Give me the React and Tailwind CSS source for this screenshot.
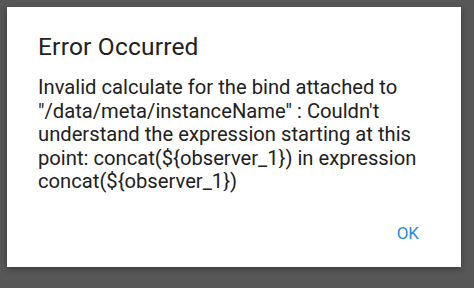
import React from 'react';

const ErrorDialog = ({ title, message, action }) => {
  return (
    <div className="w-[454px] h-[260px] bg-white flex flex-col shadow-[0_2px_6px_rgba(0,0,0,0.35)]">
      <h2 className="pl-[31px] pt-[26px] text-[24.5px] leading-[28px] tracking-[0.2px] text-[#212121]">{title}</h2>
      <p className="pl-[31px] pr-[20px] mt-[15px] text-[20.2px] leading-[23.5px] text-[#212121]">
        {message}
      </p>
      <div className="flex-1" />
      <div className="flex justify-end pr-[42px] pb-[24px]">
        <button className="text-[17px] leading-[20px] text-[#2a88e3] uppercase">{action}</button>
      </div>
    </div>
  );
};

export default function App() {
  return (
    <div
      className="w-[474px] h-[288px] bg-[#575757] pt-[7px] pl-[7px] overflow-hidden"
      style={{ fontFamily: 'Roboto, "Liberation Sans", sans-serif' }}
    >
      <ErrorDialog
        title="Error Occurred"
        message={
          <>
            Invalid calculate for the bind attached to
            <br />
            "/data/meta/instanceName" : Couldn't
            <br />
            understand the expression starting at this
            <br />
            point: concat(${'{'}observer_1{'}'}) in expression
            <br />
            concat(${'{'}observer_1{'}'})
          </>
        }
        action="OK"
      />
    </div>
  );
}
